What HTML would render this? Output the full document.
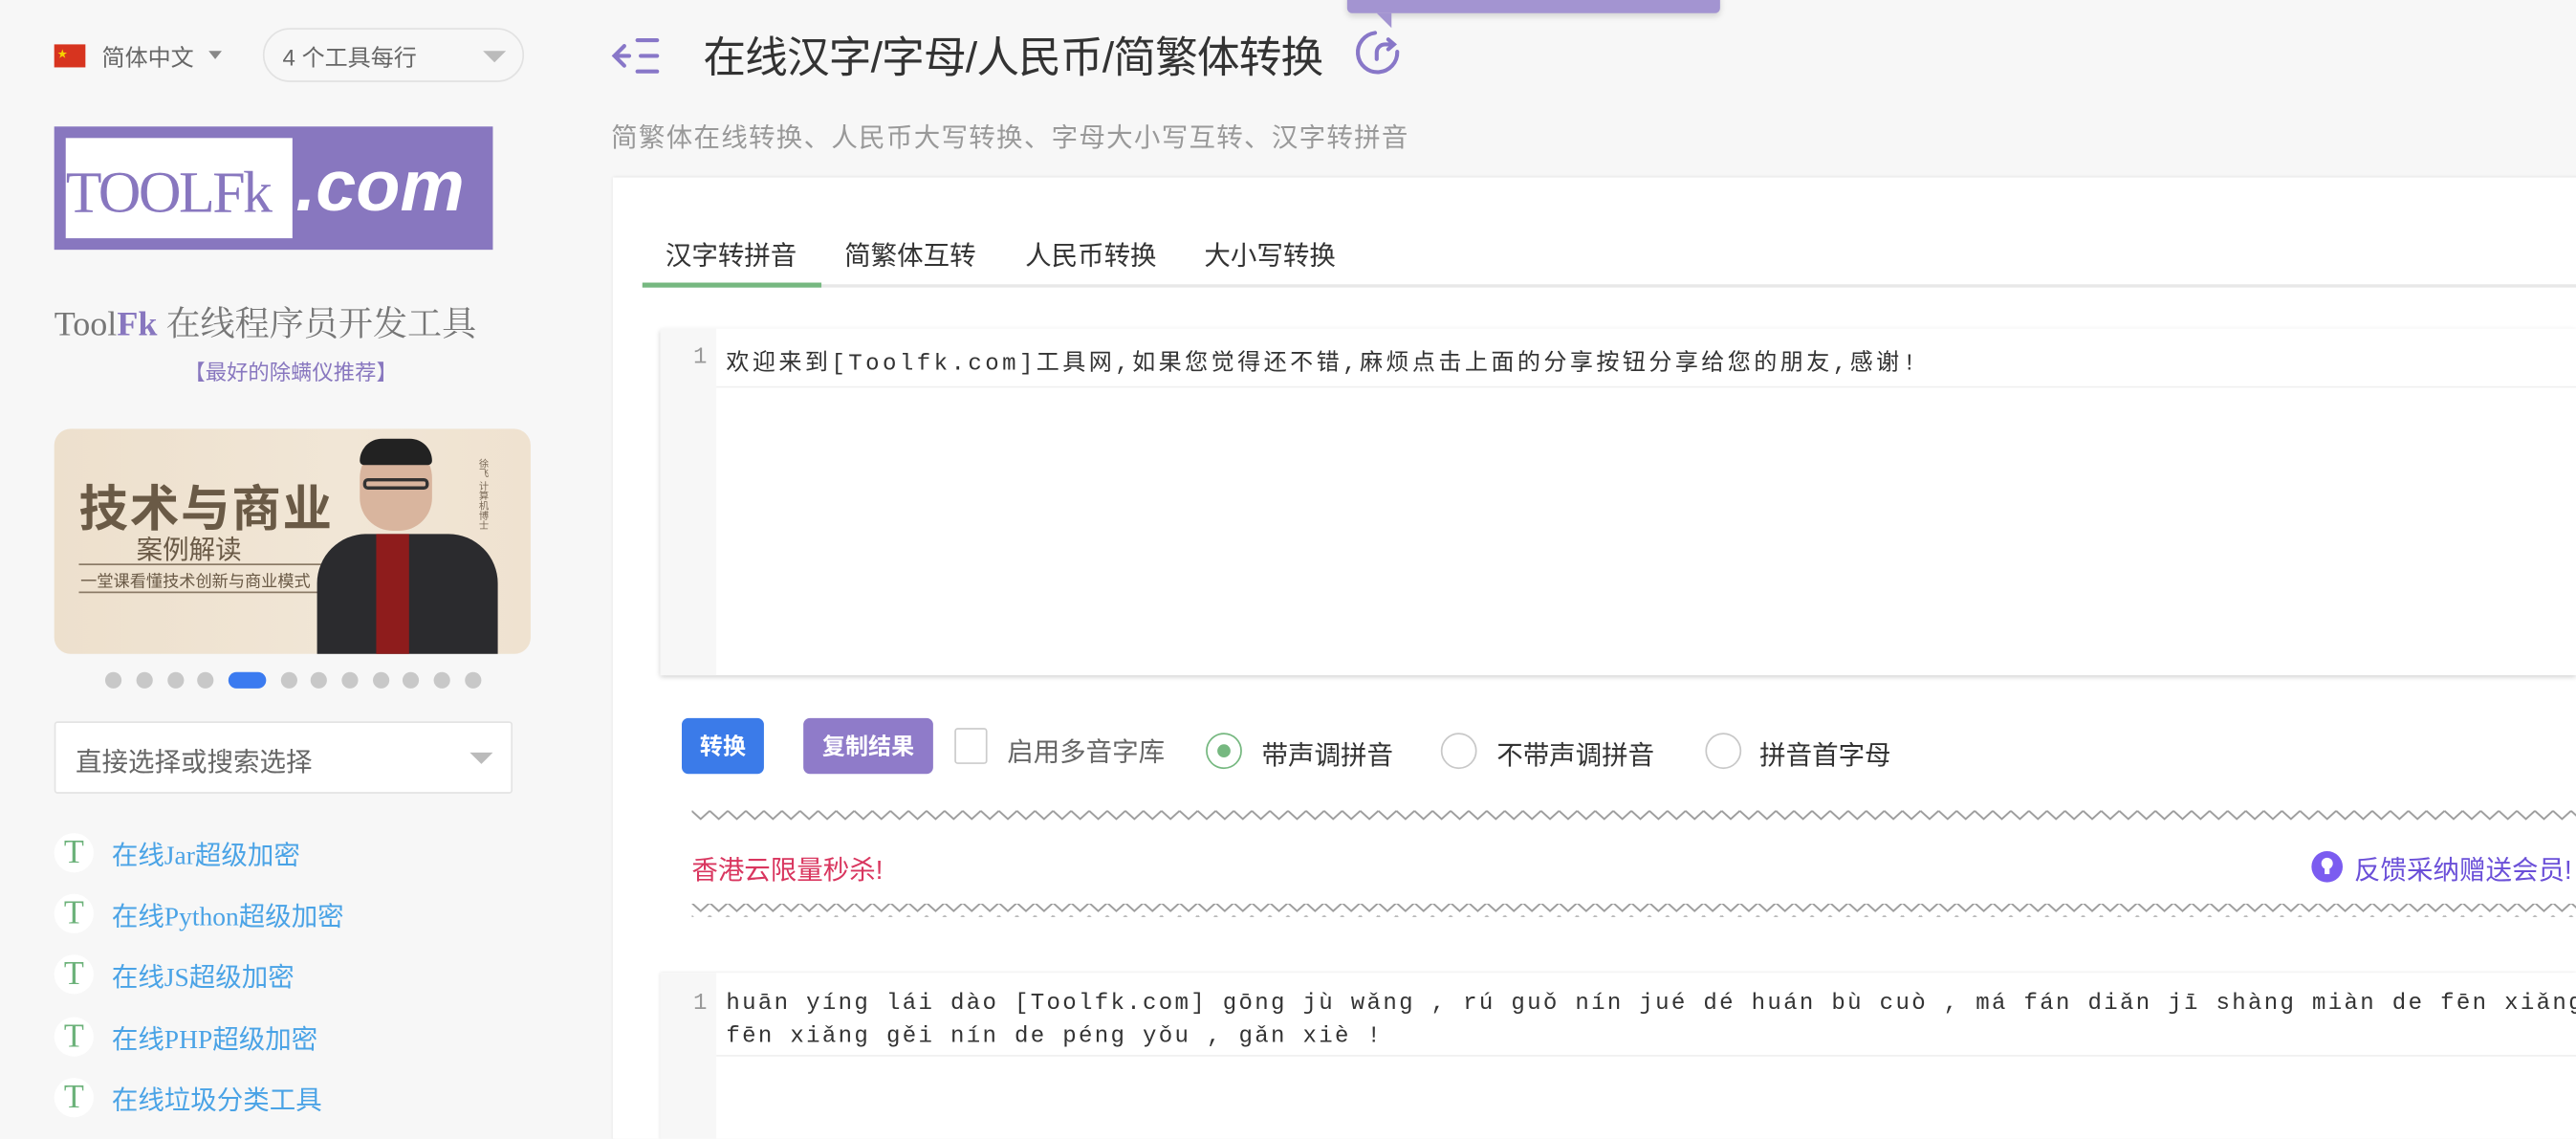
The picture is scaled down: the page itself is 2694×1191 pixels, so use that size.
<!DOCTYPE html>
<html><head><meta charset="utf-8">
<style>
html,body{margin:0;padding:0;width:2694px;height:1190px;overflow:hidden;background:#f7f7f7}
#w{position:absolute;left:0;top:0;width:1568px;height:693px;transform:scale(1.71811);transform-origin:0 0;font-family:"Liberation Sans","Noto Sans CJK SC",sans-serif;overflow:hidden}
.a{position:absolute;white-space:nowrap}
.mono{font-family:"Liberation Mono","Noto Sans CJK SC",monospace}
.dot{position:absolute;top:409px;width:10px;height:10px;border-radius:5px;background:#c8c8c8}
.li{position:absolute;left:33px;height:24px}
.li .t{position:absolute;left:0;top:0;width:24px;height:24px;border-radius:12px;background:#fff;color:#6cb27a;font-family:"Liberation Serif",serif;font-size:20px;text-align:center;line-height:24px}
.li .s{position:absolute;left:35px;top:0px;color:#4aa3e6;font-size:16px;font-family:"Liberation Serif","Noto Sans CJK SC",serif;white-space:nowrap}
.radio{position:absolute;top:446px;width:22px;height:22px;border-radius:50%;border:1.5px solid #c8c8c8;box-sizing:border-box;background:#fff}
</style></head><body><div id="w">
<!-- top left -->
<div class="a" style="left:33px;top:27px;width:19px;height:14px;background:#d7341f"></div>
<div class="a" style="left:35px;top:28px;color:#f6d200;font-size:6px">★</div>
<div class="a" style="left:62px;top:25px;font-size:14px;color:#666">简体中文</div>
<div class="a" style="left:127px;top:31px;width:0;height:0;border-left:4.5px solid transparent;border-right:4.5px solid transparent;border-top:5px solid #888"></div>
<div class="a" style="left:160px;top:17px;width:159px;height:33px;border:1px solid #e2e2e2;border-radius:17px;box-sizing:border-box"></div>
<div class="a" style="left:172px;top:25px;font-size:14px;color:#666">4 个工具每行</div>
<div class="a" style="left:294px;top:31px;width:0;height:0;border-left:7px solid transparent;border-right:7px solid transparent;border-top:7px solid #bbb"></div>
<!-- logo -->
<div class="a" style="left:33px;top:77px;width:267px;height:75px;background:#8877bf"></div>
<div class="a" style="left:40px;top:84px;width:138px;height:61px;background:#fff;overflow:hidden">
 <div class="a" style="left:0px;top:12px;font-family:'Liberation Serif',serif;font-size:36px;color:#8877bf;letter-spacing:-1.5px">TOOLFk</div>
</div>
<div class="a" style="left:180px;top:89px;font-family:'Liberation Sans',sans-serif;font-weight:bold;font-style:italic;font-size:44px;color:#fff">.com</div>
<div class="a" style="left:33px;top:181px;font-family:'Liberation Serif','Noto Serif CJK SC',serif;font-size:21px;color:#777">Tool<b style="color:#8877bf">Fk</b> 在线程序员开发工具</div>
<div class="a" style="left:112px;top:216px;font-size:13px;color:#8877bf">【最好的除螨仪推荐】</div>
<!-- banner -->
<div class="a" style="left:33px;top:261px;width:290px;height:137px;border-radius:10px;overflow:hidden;background:linear-gradient(90deg,#ede0cd,#f1e6d6 60%,#efe2d0)">
 <div class="a" style="left:15px;top:24px;font-size:30px;font-weight:bold;color:#6a5a46;letter-spacing:1px">技术与商业</div>
 <div class="a" style="left:50px;top:60px;font-size:16px;color:#6a5a46">案例解读</div>
 <div class="a" style="left:15px;top:82px;width:150px;height:1px;background:#8a7a66"></div>
 <div class="a" style="left:16px;top:84px;font-size:10px;color:#6a5a46">一堂课看懂技术创新与商业模式</div>
 <div class="a" style="left:15px;top:99px;width:150px;height:1px;background:#8a7a66"></div>
 <div class="a" style="left:186px;top:8px;width:44px;height:54px;border-radius:22px 22px 20px 20px;background:#d9b59e"></div>
 <div class="a" style="left:186px;top:6px;width:44px;height:16px;border-radius:22px 22px 4px 4px;background:#222"></div>
 <div class="a" style="left:188px;top:30px;width:40px;height:7px;border:2px solid #333;border-radius:3px;box-sizing:border-box"></div>
 <div class="a" style="left:160px;top:64px;width:110px;height:80px;border-radius:30px 30px 0 0;background:#2b2b2e"></div>
 <div class="a" style="left:196px;top:64px;width:20px;height:80px;background:#8e1c1c"></div>
 <div class="a" style="left:256px;top:18px;font-size:6px;color:#7a6a58;writing-mode:vertical-rl">徐飞 计算机博士</div>
</div>
<!-- dots -->
<div class="dot" style="left:64px"></div><div class="dot" style="left:83px"></div><div class="dot" style="left:102px"></div><div class="dot" style="left:120px"></div>
<div class="dot" style="left:139px;width:23px;background:#3b7bf0"></div>
<div class="dot" style="left:171px"></div><div class="dot" style="left:189px"></div><div class="dot" style="left:208px"></div><div class="dot" style="left:227px"></div><div class="dot" style="left:245px"></div><div class="dot" style="left:264px"></div><div class="dot" style="left:283px"></div>
<!-- search select -->
<div class="a" style="left:33px;top:439px;width:279px;height:44px;background:#fff;border:1px solid #e4e4e4;box-sizing:border-box;border-radius:2px"></div>
<div class="a" style="left:46px;top:450px;font-size:16px;color:#666">直接选择或搜索选择</div>
<div class="a" style="left:286px;top:458px;width:0;height:0;border-left:7px solid transparent;border-right:7px solid transparent;border-top:7px solid #bbb"></div>
<!-- list -->
<div class="li" style="top:507px"><div class="t">T</div><div class="s">在线Jar超级加密</div></div>
<div class="li" style="top:544px"><div class="t">T</div><div class="s">在线Python超级加密</div></div>
<div class="li" style="top:581px"><div class="t">T</div><div class="s">在线JS超级加密</div></div>
<div class="li" style="top:619px"><div class="t">T</div><div class="s">在线PHP超级加密</div></div>
<div class="li" style="top:656px"><div class="t">T</div><div class="s">在线垃圾分类工具</div></div>
<!-- header -->
<svg class="a" style="left:372px;top:22px" width="30" height="24" viewBox="0 0 30 24"><g stroke="#8877c8" stroke-width="2.4" fill="none" stroke-linecap="round"><path d="M8 6 L2 12 L8 18 M2 12 H11"/><path d="M16 2.5 H28 M18 12 H28 M16 21.5 H28"/></g></svg>
<div class="a" style="left:428px;top:15px;font-size:26px;color:#333;letter-spacing:-0.5px">在线汉字/字母/人民币/简繁体转换</div>
<div class="a" style="left:820px;top:-4px;width:227px;height:12px;background:#a394d1;border-radius:0 0 3px 3px;box-shadow:0 2px 4px rgba(0,0,0,.15)"></div>
<div class="a" style="left:838px;top:8px;width:0;height:0;border-left:9px solid transparent;border-top:9px solid #a394d1"></div>
<svg class="a" style="left:824px;top:18px" width="32" height="30" viewBox="0 0 32 30"><g stroke="#8877c8" stroke-width="2.4" fill="none" stroke-linecap="round"><path d="M13 2 A12 12 0 1 0 26.5 13.5"/><path d="M14 18 V14 A5 5 0 0 1 19 9 H24"/><path d="M21 6 L24.5 9 L21 12"/></g></svg>
<div class="a" style="left:372px;top:70px;font-size:16px;color:#999;letter-spacing:0.75px">简繁体在线转换、人民币大写转换、字母大小写互转、汉字转拼音</div>
<!-- card -->
<div class="a" style="left:373px;top:108px;width:1200px;height:600px;background:#fff;box-shadow:0 0 2px rgba(0,0,0,.12)"></div>
<div class="a" style="left:405px;top:142px;font-size:16px;color:#333">汉字转拼音</div>
<div class="a" style="left:514px;top:142px;font-size:16px;color:#333">简繁体互转</div>
<div class="a" style="left:624px;top:142px;font-size:16px;color:#333">人民币转换</div>
<div class="a" style="left:733px;top:142px;font-size:16px;color:#333">大小写转换</div>
<div class="a" style="left:391px;top:173px;width:1177px;height:2px;background:#e8e8e8"></div>
<div class="a" style="left:391px;top:172px;width:109px;height:3px;background:#76b880"></div>
<!-- editor1 -->
<div class="a" style="left:402px;top:200px;width:1166px;height:211px;background:#fff;box-shadow:0 1px 3px rgba(0,0,0,.2)"></div>
<div class="a" style="left:402px;top:200px;width:34px;height:211px;background:#f7f7f7"></div>
<div class="a" style="left:436px;top:202px;width:1132px;height:33px;border-bottom:1px solid #f0f0f0"></div>
<div class="a mono" style="left:422px;top:210px;font-size:14px;color:#999">1</div>
<div class="a mono" style="left:442px;top:210px;font-size:14px;color:#333;letter-spacing:2px">欢迎来到[Toolfk.com]工具网,如果您觉得还不错,麻烦点击上面的分享按钮分享给您的朋友,感谢!</div>
<!-- controls -->
<div class="a" style="left:415px;top:437px;width:50px;height:34px;background:#3b7be9;border-radius:4px;color:#fff;font-size:14px;font-weight:bold;text-align:center;line-height:34px">转换</div>
<div class="a" style="left:489px;top:437px;width:79px;height:34px;background:#8f7bc9;border-radius:4px;color:#fff;font-size:14px;font-weight:bold;text-align:center;line-height:34px">复制结果</div>
<div class="a" style="left:581px;top:443px;width:20px;height:22px;border:1.5px solid #ccc;border-radius:2px;box-sizing:border-box"></div>
<div class="a" style="left:613px;top:444px;font-size:16px;color:#666">启用多音字库</div>
<div class="radio" style="left:734px;border-color:#76b880"></div>
<div class="a" style="left:741px;top:453px;width:8px;height:8px;border-radius:50%;background:#76b880"></div>
<div class="a" style="left:768px;top:446px;font-size:16px;color:#333">带声调拼音</div>
<div class="radio" style="left:877px"></div>
<div class="a" style="left:911px;top:446px;font-size:16px;color:#333">不带声调拼音</div>
<div class="radio" style="left:1038px"></div>
<div class="a" style="left:1071px;top:446px;font-size:16px;color:#333">拼音首字母</div>
<svg class="a" style="left:421px;top:492px" width="1150" height="70"><defs><pattern id="wv" width="11" height="8" patternUnits="userSpaceOnUse"><path d="M0 1.5 L5.5 6.5 L11 1.5" stroke="#9a9a9a" stroke-width="1.1" fill="none"/></pattern></defs><rect x="0" y="0" width="1150" height="8" fill="url(#wv)"/><rect x="0" y="58" width="1150" height="8" fill="url(#wv)"/></svg>
<div class="a" style="left:421px;top:516px;font-size:16px;color:#d9365f">香港云限量秒杀!</div>
<div class="a" style="left:1407px;top:518px;width:19px;height:19px;border-radius:50%;background:#7b5cf0"></div>
<div class="a" style="left:1413px;top:522px;width:7px;height:7px;border-radius:50%;background:#fff"></div>
<div class="a" style="left:1415px;top:528px;width:3px;height:4px;background:#fff"></div>
<div class="a" style="left:1433px;top:516px;font-size:16px;color:#6a4fd8">反馈采纳赠送会员!</div>
<!-- editor2 -->
<div class="a" style="left:402px;top:592px;width:1166px;height:110px;background:#fff;box-shadow:0 0 2px rgba(0,0,0,.12)"></div>
<div class="a" style="left:402px;top:592px;width:34px;height:110px;background:#f7f7f7"></div>
<div class="a" style="left:436px;top:598px;width:1132px;height:44px;border-bottom:1px solid #f0f0f0"></div>
<div class="a mono" style="left:422px;top:603px;font-size:14px;color:#999">1</div>
<div class="a mono" style="left:442px;top:601px;font-size:14px;color:#333;line-height:20px;letter-spacing:1.35px">huān yíng lái dào [Toolfk.com] gōng jù wǎng , rú guǒ nín jué dé huán bù cuò , má fán diǎn jī shàng miàn de fēn xiǎng àn niǔ<br>fēn xiǎng gěi nín de péng yǒu , gǎn xiè !</div>
</div></body></html>
